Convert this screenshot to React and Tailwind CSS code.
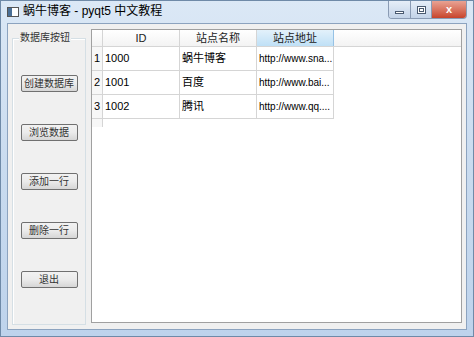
const font = { fontFamily: '"Liberation Sans", "Noto Sans CJK SC", sans-serif' }

function CaptionButtons() {
  return (
    <div className="flex h-[18px] self-start overflow-hidden rounded-b-[4px] border border-t-0 border-[#8a9bb4]">
      <div className="flex w-[22px] items-center justify-center border-r border-[#8a9bb4] bg-gradient-to-b from-[#e6eef8] to-[#c3d3e8]">
        <div className="mt-[5px] h-[3px] w-[9px] border border-[#4a5a70] bg-white" />
      </div>
      <div className="flex w-[21px] items-center justify-center border-r border-[#8a9bb4] bg-gradient-to-b from-[#e6eef8] to-[#c3d3e8]">
        <div className="h-[8px] w-[9px] border border-[#4a5a70] bg-white">
          <div className="m-[1px] h-[4px] border border-[#4a5a70]" />
        </div>
      </div>
      <div className="flex w-[34px] items-center justify-center bg-gradient-to-b from-[#e8a293] to-[#c7432b] text-[11px] font-bold leading-none text-white">
        x
      </div>
    </div>
  )
}

function Btn({ label }) {
  return (
    <div className="flex h-[17px] w-[57px] items-center justify-center rounded-[2px] border border-[#707070] bg-gradient-to-b from-[#f2f2f2] via-[#ebebeb] to-[#d6d6d6] text-[10px] text-[#333]">
      {label}
    </div>
  )
}

const rows = [
  ['1', '1000', '蜗牛博客', 'http://www.sna...'],
  ['2', '1001', '百度', 'http://www.bai...'],
  ['3', '1002', '腾讯', 'http://www.qq....'],
]

export default function App() {
  return (
    <div className="h-[337px] w-[474px] overflow-hidden bg-[#c9dcf1]" style={font}>
      <div className="flex h-full flex-col border border-[#6f8aa8] bg-gradient-to-b from-[#dbe8f6] via-[#c9dbef] to-[#bed3ec]">
        <div className="flex h-[21px] shrink-0 items-start pl-[6px] pr-[6px]">
          <div className="mt-[6px] flex h-[10px] w-[12px] items-center border border-[#555] bg-white">
            <div className="h-full w-[4px] bg-[#4a6f96]" />
          </div>
          <div className="ml-[4px] mt-[3px] text-[12px] leading-[14px] text-black">蜗牛博客 - pyqt5 中文教程</div>
          <div className="flex-1" />
          <CaptionButtons />
        </div>
        <div className="mx-[6px] mb-[6px] mt-[1px] flex flex-1 border border-[#8ca3bf] bg-[#f0f0f0]">
          <div className="flex flex-1 gap-[5px] pb-[6px] pl-[4px] pr-[4px] pt-[5px]">
            <div className="relative mt-[9px] mb-[-2px] flex w-[74px] shrink-0 flex-col items-center border border-[#d5dfe5] pt-[36px] shadow-[inset_1px_1px_0_#fff]">
              <div className="absolute -top-[8px] left-[6px] bg-[#f0f0f0] px-[1px] text-[10px] leading-[14px] text-[#333]">数据库按钮</div>
              <div className="flex flex-col gap-[32px]">
                <Btn label="创建数据库" />
                <Btn label="浏览数据" />
                <Btn label="添加一行" />
                <Btn label="删除一行" />
                <Btn label="退出" />
              </div>
            </div>
            <div className="flex-1 border border-[#a0a0a0] bg-white">
              <div className="flex h-[17px] border-b border-[#d5d5d5] bg-gradient-to-b from-white to-[#f3f3f3] text-[11px] leading-[16px] text-[#222]">
                <div className="w-[11px] border-r border-[#d5d5d5]" />
                <div className="w-[77px] border-r border-[#d5d5d5] text-center">ID</div>
                <div className="w-[77px] border-r border-[#d5d5d5] text-center">站点名称</div>
                <div className="w-[77px] border-r border-[#96c2e5] bg-gradient-to-b from-[#e3f1fb] to-[#bfe0f6] text-center">站点地址</div>
              </div>
              {rows.map((r) => (
                <div key={r[0]} className="flex h-[24px] text-[11px] leading-[23px] text-black">
                  <div className="w-[11px] border-b border-r border-[#d5d5d5] bg-[#f7f7f7] pl-[2px]">{r[0]}</div>
                  <div className="w-[77px] border-b border-r border-[#d5d5d5] pl-[2px]">{r[1]}</div>
                  <div className="w-[77px] border-b border-r border-[#d5d5d5] pl-[2px]">{r[2]}</div>
                  <div className="w-[77px] truncate border-b border-r border-[#d5d5d5] pl-[2px] text-[10px]">{r[3]}</div>
                </div>
              ))}
              <div className="ml-0 h-[8px] w-[11px] border-r border-[#d5d5d5] bg-[#f7f7f7]" />
            </div>
          </div>
        </div>
      </div>
    </div>
  )
}
